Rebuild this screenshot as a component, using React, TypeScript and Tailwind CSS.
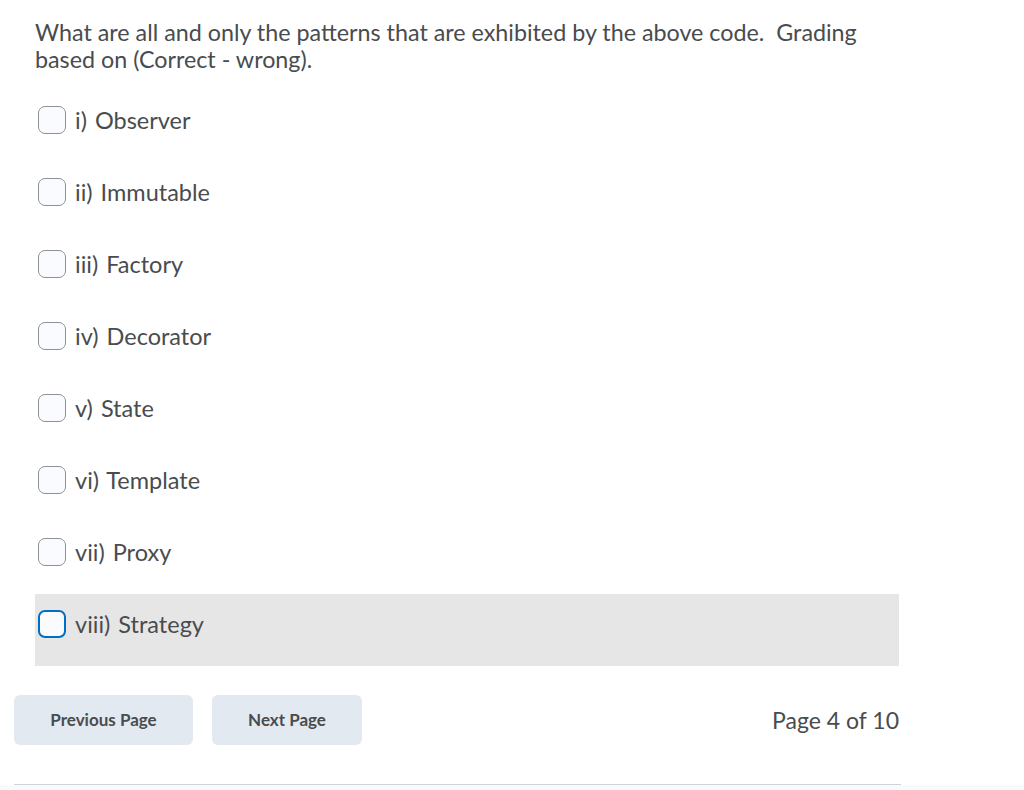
import React from "react";

const options = [
  "i) Observer",
  "ii) Immutable",
  "iii) Factory",
  "iv) Decorator",
  "v) State",
  "vi) Template",
  "vii) Proxy",
  "viii) Strategy",
];

export default function App() {
  return (
    <div
      className="w-[1024px] h-[790px] bg-white text-[#494c4e] overflow-hidden flex flex-col"
      style={{ fontFamily: "Lato, 'Noto Sans', sans-serif" }}
    >
      <div className="pl-[35px] pr-[125px] pt-[19px]">
        <p className="text-[23.3px] leading-[27px]">
          What are all and only the patterns that are exhibited by the above code.&nbsp; Grading based on (Correct - wrong).
        </p>
        <div className="mt-[17px] flex flex-col">
          {options.map((o, i) => {
            const last = i === options.length - 1;
            return (
              <div
                key={o}
                className={`h-[72px] flex items-start pt-[16px] pl-[3px] ${last ? "bg-[#e6e6e6]" : ""}`}
              >
                <span
                  className={`w-[28px] h-[28px] rounded-[7px] bg-[#f9fbff] shrink-0 ${
                    last ? "border-[2px] border-[#006fbf]" : "border border-[#8d9195]"
                  }`}
                />
                <span className="ml-[9px] text-[23.5px] leading-[29px] [word-spacing:2px]">{o}</span>
              </div>
            );
          })}
        </div>
      </div>
      <div className="mt-[29px] pl-[14px] pr-[125px] flex items-center">
        <button className="w-[179px] h-[50px] rounded-[6px] bg-[#e3e9f1] text-[17px] font-bold text-[#494c4e]">
          Previous Page
        </button>
        <button className="ml-[19px] w-[150px] h-[50px] rounded-[6px] bg-[#e3e9f1] text-[17px] font-bold text-[#494c4e]">
          Next Page
        </button>
        <span className="ml-auto text-[23px]">Page 4 of 10</span>
      </div>
      <div className="mt-[39px] ml-[14px] w-[887px] border-t border-[#cdd5dc]" />
      <div className="flex-1 bg-[#f9fafb]" />
    </div>
  );
}
